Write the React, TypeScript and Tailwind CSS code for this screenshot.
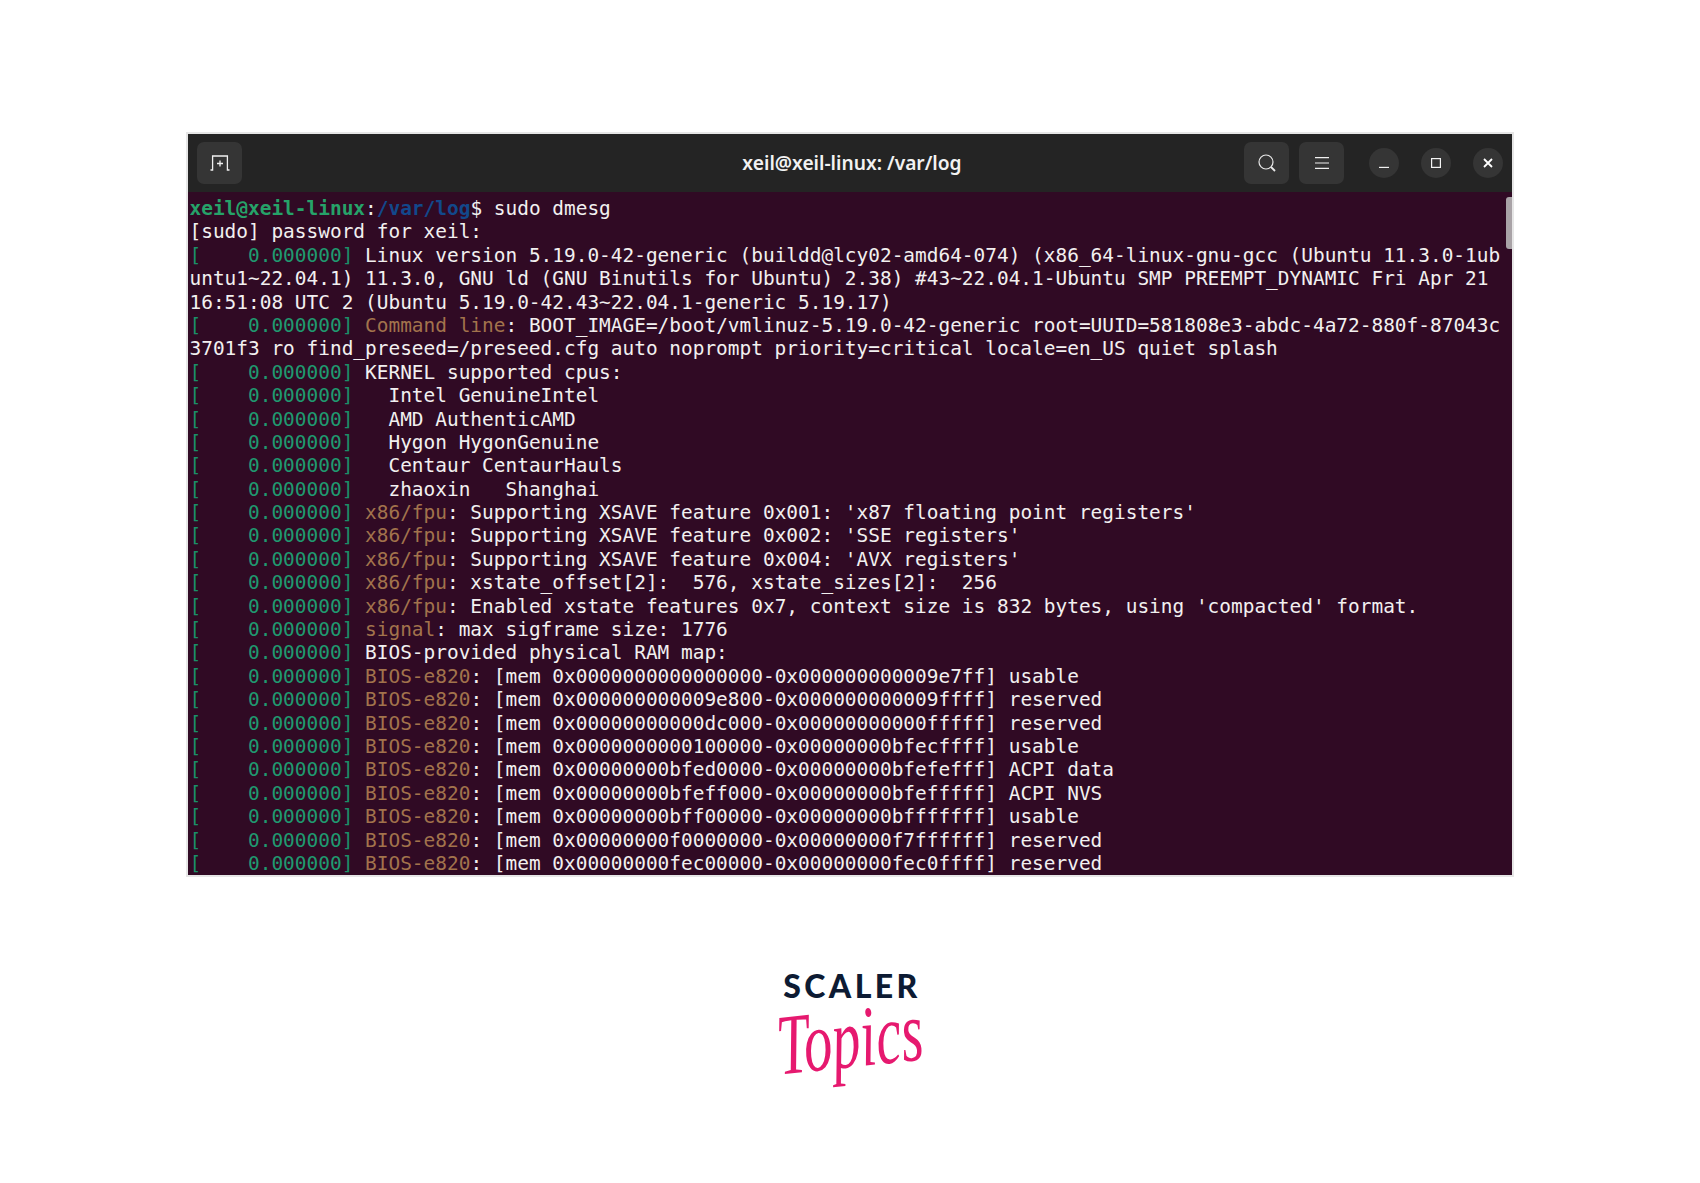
import React from "react";

const G = "text-[#1f9a70]";
const B = "text-[#a2734c]";

function Ts() {
  return (
    <>
      <span className="text-[#1a8f68]">[</span>
      <span className={G}>{"    0.000000"}</span>
      <span className="text-[#1a8f68]">]</span>
      {" "}
    </>
  );
}

function Row({ tag, text }: { tag?: string; text: string }) {
  return (
    <div className="h-[23.4px]">
      <Ts />
      {tag ? <span className={B}>{tag}</span> : null}
      {text}
    </div>
  );
}

const plain = ["KERNEL supported cpus:", "  Intel GenuineIntel", "  AMD AuthenticAMD", "  Hygon HygonGenuine", "  Centaur CentaurHauls", "  zhaoxin   Shanghai"];
const fpu: [string, string][] = [
  ["x86/fpu", ": Supporting XSAVE feature 0x001: 'x87 floating point registers'"],
  ["x86/fpu", ": Supporting XSAVE feature 0x002: 'SSE registers'"],
  ["x86/fpu", ": Supporting XSAVE feature 0x004: 'AVX registers'"],
  ["x86/fpu", ": xstate_offset[2]:  576, xstate_sizes[2]:  256"],
  ["x86/fpu", ": Enabled xstate features 0x7, context size is 832 bytes, using 'compacted' format."],
  ["signal", ": max sigframe size: 1776"],
];
const bios = [
  "0x0000000000000000-0x000000000009e7ff] usable",
  "0x000000000009e800-0x000000000009ffff] reserved",
  "0x00000000000dc000-0x00000000000fffff] reserved",
  "0x0000000000100000-0x00000000bfecffff] usable",
  "0x00000000bfed0000-0x00000000bfefefff] ACPI data",
  "0x00000000bfeff000-0x00000000bfefffff] ACPI NVS",
  "0x00000000bff00000-0x00000000bfffffff] usable",
  "0x00000000f0000000-0x00000000f7ffffff] reserved",
  "0x00000000fec00000-0x00000000fec0ffff] reserved",
];

function IconButton({ children }: { children: React.ReactNode }) {
  return <div className="w-[45px] h-[42px] rounded-[7px] bg-[#353535] flex items-center justify-center">{children}</div>;
}

function WinButton({ children }: { children: React.ReactNode }) {
  return <div className="w-[30px] h-[30px] rounded-full bg-[#353535] flex items-center justify-center">{children}</div>;
}

export default function App() {
  return (
    <div className="w-[1700px] h-[1183px] bg-white flex flex-col items-center pt-[132px] overflow-hidden">
      <div className="w-[1328px] h-[745px] border-2 border-[#e6e6e6] flex flex-col shrink-0 overflow-hidden">
        <header className="h-[58px] shrink-0 bg-[#242424] flex items-center pl-[9px] pr-[9px] relative">
          <IconButton>
            <svg width="20" height="16" viewBox="0 0 20 16" fill="none" stroke="#f0f0f0" strokeWidth="1.3">
              <path d="M0.5 15H2.6V1H17.4V15H19.5" />
              <path d="M10 5.5V11.5M7 8.5H13" />
            </svg>
          </IconButton>
          <div className="absolute inset-x-0 pl-[4px] text-center text-[#f2f2f2] text-[19.2px] leading-[26px] font-semibold [font-family:'Noto_Sans',sans-serif]">
            xeil@xeil-linux: /var/log
          </div>
          <div className="ml-auto flex items-center relative">
            <IconButton>
              <svg width="20" height="20" viewBox="0 0 20 20" fill="none" stroke="#e8e8e8">
                <circle cx="9" cy="9" r="7" strokeWidth="1.2" />
                <path d="M14 14L18 18" strokeWidth="1.8" />
              </svg>
            </IconButton>
            <div className="ml-[10px] mr-[25px]">
              <IconButton>
                <svg width="14" height="12" viewBox="0 0 14 12" fill="none" stroke="#f0f0f0" strokeWidth="1.2">
                  <path d="M0 0.6H14M0 6H14M0 11.4H14" />
                </svg>
              </IconButton>
            </div>
            <div className="flex gap-[22px]">
              <WinButton>
                <svg width="10" height="10" viewBox="0 0 10 10" fill="none" stroke="#f0f0f0" strokeWidth="1.2"><path d="M0 9.4H10" /></svg>
              </WinButton>
              <WinButton>
                <svg width="10" height="10" viewBox="0 0 10 10" fill="none" stroke="#f4f4f4" strokeWidth="1.2"><rect x="0.6" y="0.6" width="8.8" height="8.8" /></svg>
              </WinButton>
              <WinButton>
                <svg width="10" height="10" viewBox="0 0 10 10" fill="none" stroke="#ffffff" strokeWidth="1.8"><path d="M1 1L9 9M9 1L1 9" /></svg>
              </WinButton>
            </div>
          </div>
        </header>
        <main className="relative flex-1 bg-[#300a24] overflow-hidden pl-[1.5px] pt-[5px] text-[#f2f0f0] text-[19.45px] leading-[23.4px] whitespace-pre [font-family:'DejaVu_Sans_Mono',monospace]">
          <div className="h-[23.4px]">
            <span className="font-bold text-[#26a269]">xeil@xeil-linux</span>:<span className="font-bold text-[#12488b]">/var/log</span>$ sudo dmesg
          </div>
          <div className="h-[23.4px]">[sudo] password for xeil:</div>
          <Row text="Linux version 5.19.0-42-generic (buildd@lcy02-amd64-074) (x86_64-linux-gnu-gcc (Ubuntu 11.3.0-1ub" />
          <div className="h-[23.4px]">untu1~22.04.1) 11.3.0, GNU ld (GNU Binutils for Ubuntu) 2.38) #43~22.04.1-Ubuntu SMP PREEMPT_DYNAMIC Fri Apr 21</div>
          <div className="h-[23.4px]">16:51:08 UTC 2 (Ubuntu 5.19.0-42.43~22.04.1-generic 5.19.17)</div>
          <Row tag="Command line" text=": BOOT_IMAGE=/boot/vmlinuz-5.19.0-42-generic root=UUID=581808e3-abdc-4a72-880f-87043c" />
          <div className="h-[23.4px]">3701f3 ro find_preseed=/preseed.cfg auto noprompt priority=critical locale=en_US quiet splash</div>
          {plain.map((t) => <Row key={t} text={t} />)}
          {fpu.map(([a, b]) => <Row key={b} tag={a} text={b} />)}
          <Row text="BIOS-provided physical RAM map:" />
          {bios.map((t) => <Row key={t} tag="BIOS-e820" text={": [mem " + t} />)}
          <div className="absolute right-0 top-[5px] w-[6px] h-[52px] rounded-l-[3px] bg-[#a9a3a7]" />
        </main>
      </div>
      <div className="mt-[94px] flex flex-col items-center">
        <div className="pl-[4px] text-[#0d1b33] text-[32px] leading-[30px] font-black tracking-[0.107em] [font-family:'Lato',sans-serif]">SCALER</div>
        <div className="mt-[1px] text-[#e6196f] text-[86px] leading-[72px] italic [transform:rotate(-6deg)_scaleX(0.66)] [font-family:'Liberation_Serif',serif]">Topics</div>
      </div>
    </div>
  );
}
